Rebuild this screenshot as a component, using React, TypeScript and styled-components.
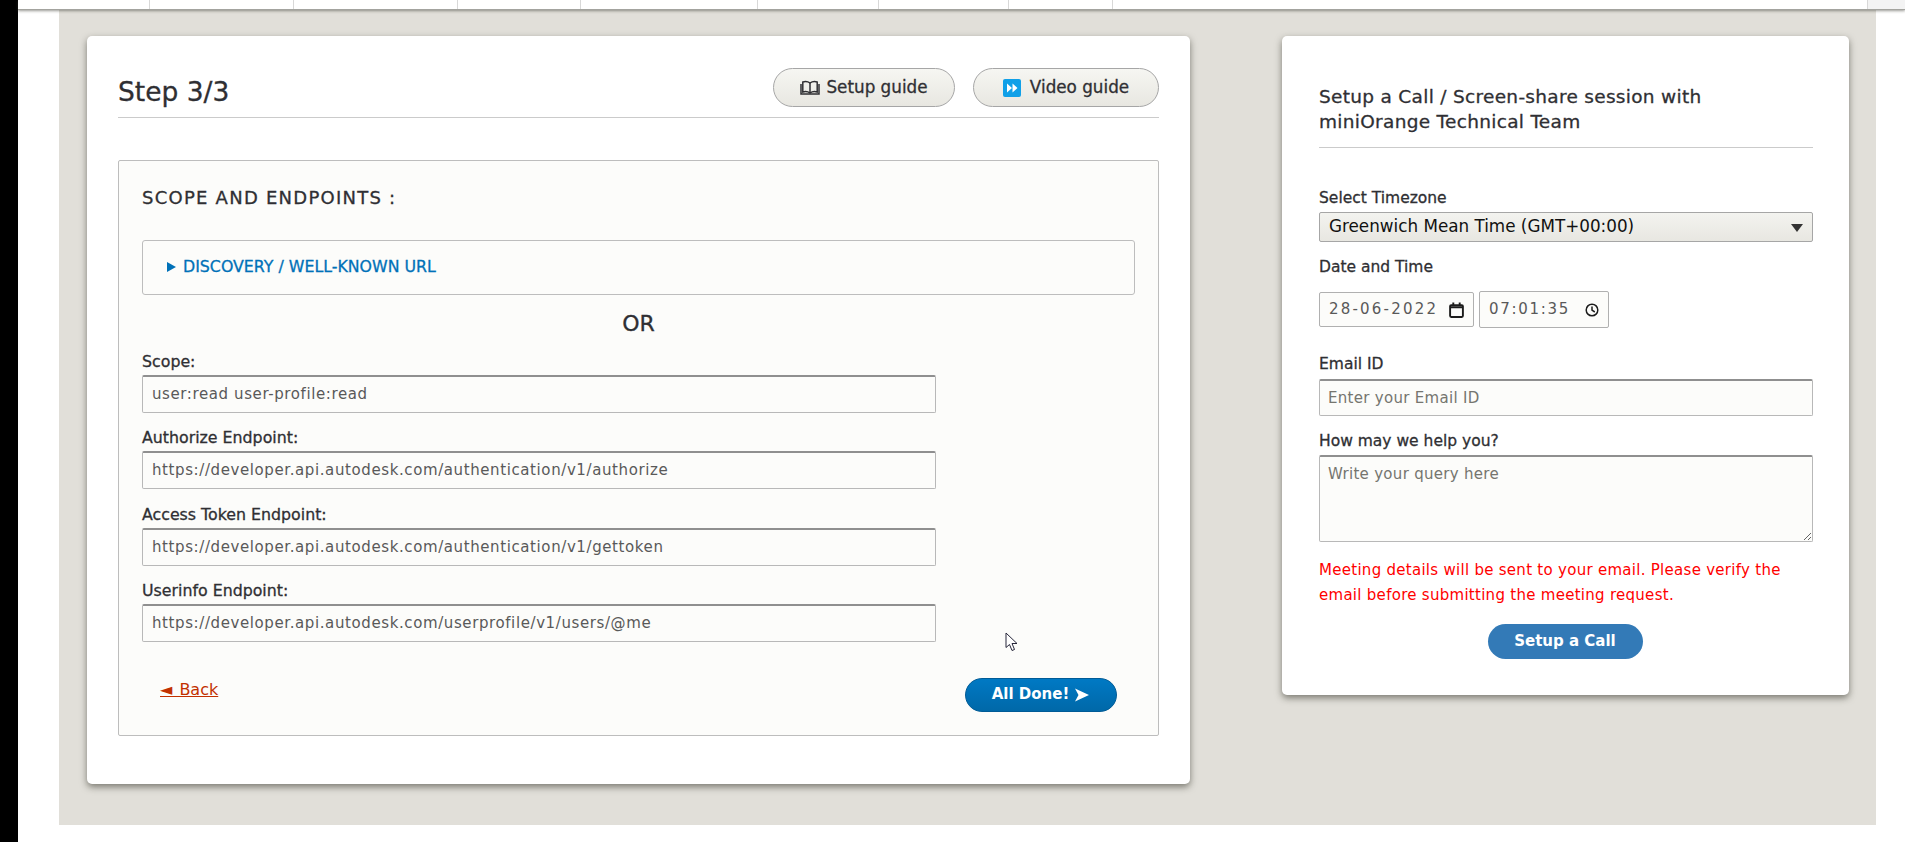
import React from "react";
import styled, { createGlobalStyle, css } from "styled-components";

const heavy = css`
  -webkit-text-stroke: 0.3px currentColor;
`;

const Global = createGlobalStyle`
  html, body { margin: 0; padding: 0; background: #fff; overflow: hidden; }
  * { box-sizing: border-box; }
  body { font-family: "DejaVu Sans", "Open Sans", sans-serif; color: #2f2f33; }
`;

const Page = styled.div`
  display: flex;
  height: 842px;
  background: #fff;
`;
const BlackEdge = styled.div`
  width: 18px;
  background: #000;
  flex: none;
`;
const Column = styled.div`
  flex: 1;
  display: flex;
  flex-direction: column;
  align-items: flex-start;
  min-width: 0;
`;
const TopBar = styled.div`
  width: 100%;
  height: 10px;
  display: flex;
  flex: none;
  position: relative;
  z-index: 2;
  background: #fff;
  border-bottom: 1px solid #a3a39e;
  box-shadow: 0 1px 3px rgba(70, 70, 60, 0.55);
`;
const TopCell = styled.div<{ $w: number }>`
  flex: none;
  width: ${(p) => p.$w}px;
  border-right: 1px solid #d8d8d8;
`;
const TopRest = styled.div`
  flex: 1;
  background: #f3f3f3;
`;
const Main = styled.main`
  margin-left: 41px;
  width: 1817px;
  height: 815px;
  flex: none;
  background: #e1dfd9;
  padding: 26px 27px 0 28px;
  display: flex;
  align-items: flex-start;
  justify-content: space-between;
  position: relative;
`;
const Card = styled.section`
  background: #fff;
  border-radius: 5px;
  box-shadow: 0 3px 7px rgba(40, 40, 30, 0.55);
`;
const WizardCard = styled(Card)`
  width: 1103px;
  height: 748px;
  padding: 32px 31px 0;
`;
const CallCard = styled(Card)`
  width: 567px;
  height: 659px;
  padding: 48px 36px 0 37px;
`;
const Header = styled.header`
  display: flex;
  align-items: flex-start;
  justify-content: space-between;
  height: 50px;
  border-bottom: 1px solid #cbcbcb;
`;
const Heading = styled.h1`
  ${heavy}
  margin: 10px 0 0;
  font-size: 26.5px;
  line-height: 28px;
  font-weight: 400;
  color: #2f2f33;
`;
const GuideGroup = styled.div`
  display: flex;
  gap: 18px;
`;
const GuideButton = styled.button<{ $w: number; $gap: number }>`
  ${heavy}
  width: ${(p) => p.$w}px;
  height: 39px;
  border: 1px solid #a6a6a6;
  border-radius: 20px;
  background: linear-gradient(#f6f6f2, #e8e7e1);
  font: 400 16.8px/1 "DejaVu Sans", sans-serif;
  color: #2f2f33;
  display: flex;
  align-items: center;
  justify-content: center;
  gap: ${(p) => p.$gap}px;
  padding: 0;
`;
const Panel = styled.div`
  margin-top: 42px;
  height: 576px;
  border: 1px solid #bdbdbd;
  border-radius: 2px;
  background: #fcfcfa;
  padding: 27px 23px 0 23px;
`;
const PanelTitle = styled.h2`
  ${heavy}
  margin: 0;
  font-size: 18px;
  line-height: 20px;
  font-weight: 400;
  letter-spacing: 1.25px;
  color: #2f2f33;
`;
const Discovery = styled.details`
  margin-top: 32px;
  height: 55px;
  border: 1px solid #bdbdbd;
  border-radius: 3px;
  padding: 17px 0 0 24px;
`;
const DiscoverySummary = styled.summary`
  ${heavy}
  list-style: none;
  display: flex;
  align-items: center;
  gap: 6px;
  color: #0071b8;
  font-size: 15.8px;
  line-height: 18px;
`;
const Caret = styled.span`
  width: 0;
  height: 0;
  border-left: 9px solid #0071b8;
  border-top: 5px solid transparent;
  border-bottom: 5px solid transparent;
  margin-right: 1px;
`;
const Or = styled.div`
  ${heavy}
  margin-top: 17px;
  text-align: center;
  font-size: 22px;
  line-height: 24px;
  font-weight: 400;
  color: #2f2f33;
`;
const FieldStack = styled.div`
  margin-top: 17px;
  display: flex;
  flex-direction: column;
  gap: 16.33px;
`;
const Field = styled.div`
  display: flex;
  flex-direction: column;
  gap: 4px;
`;
const Label = styled.label`
  ${heavy}
  display: block;
  font-size: 15.8px;
  line-height: 18px;
  color: #2f2f33;
`;
const TextInput = styled.input<{ $h?: number }>`
  display: block;
  width: 100%;
  height: ${(p) => p.$h ?? 38}px;
  border: 1px solid #b8b8b8;
  border-top-color: #8f8f8f;
  border-top-width: 2px;
  border-radius: 2px;
  background: #fcfcfa;
  padding: 0 8px 1px;
  font: 400 15px "DejaVu Sans", sans-serif;
  letter-spacing: 0.3px;
  color: #595959;
  &::placeholder { color: #75756f; opacity: 1; }
`;
const WideInput = styled(TextInput)`
  width: 794px;
  padding-left: 9px;
  letter-spacing: 0.6px;
`;
const Actions = styled.div`
  margin-top: 36px;
  display: flex;
  justify-content: space-between;
  align-items: flex-start;
  padding: 0 18px 0 18px;
`;
const BackLink = styled.a`
  margin-top: 3px;
  color: #c23000;
  font-size: 16px;
  word-spacing: 2px;
  line-height: 18px;
  text-decoration: underline;
`;
const DoneButton = styled.button`
  width: 152px;
  height: 34px;
  border: 1px solid #005b96;
  border-radius: 17px;
  background: linear-gradient(#0079c4, #0068a8);
  color: #fff;
  font: 700 15px/1 "DejaVu Sans", sans-serif;
  padding: 0;
  display: flex;
  align-items: center;
  justify-content: center;
  gap: 5px;
`;
const CallTitle = styled.h2`
  ${heavy}
  margin: 0;
  font-size: 18.5px;
  line-height: 25px;
  letter-spacing: 0.3px;
  font-weight: 400;
  color: #2f2f33;
  padding-bottom: 13px;
  border-bottom: 1px solid #cbcbcb;
`;
const CallForm = styled.form`
  display: flex;
  flex-direction: column;
`;
const CallLabel = styled(Label)<{ $top: number; $bottom: number }>`
  font-size: 15.5px;
  margin-top: ${(p) => p.$top}px;
  margin-bottom: ${(p) => p.$bottom}px;
`;
const SelectWrap = styled.div`
  position: relative;
  height: 30px;
  &::after {
    content: "";
    position: absolute;
    right: 10px;
    top: 12px;
    border-top: 8px solid #333;
    border-left: 6px solid transparent;
    border-right: 6px solid transparent;
    pointer-events: none;
  }
`;
const TimezoneSelect = styled.select`
  appearance: none;
  display: block;
  width: 100%;
  height: 30px;
  border: 1px solid #a6a6a6;
  border-radius: 2px;
  background: linear-gradient(#f3f3ef, #e8e7e1);
  padding: 0 9px 3px;
  font: 400 16.8px "DejaVu Sans", sans-serif;
  color: #111;
`;
const DateRow = styled.div`
  margin-top: 9px;
  display: flex;
  align-items: center;
  gap: 5px;
`;
const DateBox = styled.div<{ $w: number; $h: number }>`
  position: relative;
  width: ${(p) => p.$w}px;
  height: ${(p) => p.$h}px;
`;
const DateInput = styled.input<{ $ls: number }>`
  width: 100%;
  height: 100%;
  border: 1px solid #b0b0b0;
  border-radius: 2px;
  background: #fcfcfa;
  padding: 0 9px 2px;
  font: 400 15px "DejaVu Sans", sans-serif;
  letter-spacing: ${(p) => p.$ls}px;
  color: #595959;
`;
const PickerIcon = styled.svg`
  position: absolute;
  right: 10px;
  top: 50%;
  transform: translateY(-50%);
`;
const Query = styled.textarea`
  display: block;
  width: 100%;
  height: 87px;
  border: 1px solid #b8b8b8;
  border-top: 2px solid #8f8f8f;
  border-radius: 2px;
  background: #fcfcfa;
  padding: 8px 8px;
  font: 400 15px "DejaVu Sans", sans-serif;
  letter-spacing: 0.3px;
  color: #595959;
  &::placeholder { color: #75756f; opacity: 1; }
`;
const Notice = styled.p`
  margin: 16px 0 0;
  color: #f00;
  font-size: 15px;
  letter-spacing: 0.28px;
  line-height: 25px;
`;
const CallButton = styled.button`
  align-self: center;
  margin: 16px 2px 0 0;
  width: 155px;
  height: 35px;
  border: none;
  border-radius: 18px;
  background: #337ab7;
  color: #fff;
  font: 700 15px/1 "DejaVu Sans", sans-serif;
  padding: 0;
`;
const PointerArrow = styled.svg`
  position: absolute;
  left: 946px;
  top: 622px;
  z-index: 3;
`;

const BookIcon = () => (
  <svg width="20" height="16" viewBox="0 0 20 16" fill="none" stroke="#2f2f33" strokeWidth="1.5">
    <path d="M10 3 C8 1.6 5 1.4 2.8 2 V12 C5 11.4 8 11.6 10 13 C12 11.6 15 11.4 17.2 12 V2 C15 1.4 12 1.6 10 3 Z" />
    <path d="M10 3 V13" />
    <path d="M1 4 V14 H19 V4" />
  </svg>
);
const ForwardIcon = () => (
  <svg width="18" height="18" viewBox="0 0 18 18">
    <rect width="18" height="18" rx="2" fill="#10a0e8" />
    <path d="M4 4.5 L9 9 L4 13.5 Z M9.5 4.5 L14.5 9 L9.5 13.5 Z" fill="#fff" />
  </svg>
);
const NextChevron = () => (
  <svg width="16" height="16" viewBox="0 0 16 16">
    <path d="M1 1.5 L15 8 L1 14.5 L4.5 8 Z" fill="#fff" />
  </svg>
);
const CalendarIcon = () => (
  <PickerIcon width="15" height="16" viewBox="0 0 14 15" fill="none" stroke="#1c1c1c" strokeWidth="1.8">
    <rect x="1" y="3" width="12" height="11" rx="1" />
    <path d="M1 5 H13 M4 0.5 V3 M10 0.5 V3" />
  </PickerIcon>
);
const ClockIcon = () => (
  <PickerIcon width="14" height="14" viewBox="0 0 14 14" fill="none" stroke="#1c1c1c" strokeWidth="1.5">
    <circle cx="7" cy="7" r="5.8" />
    <path d="M7 3.5 V7.2 L9.8 9" />
  </PickerIcon>
);

const topCells = [132, 144, 164, 123, 177, 121, 130, 104, 755];
const endpoints = [
  { label: "Scope:", value: "user:read user-profile:read" },
  { label: "Authorize Endpoint:", value: "https://developer.api.autodesk.com/authentication/v1/authorize" },
  { label: "Access Token Endpoint:", value: "https://developer.api.autodesk.com/authentication/v1/gettoken" },
  { label: "Userinfo Endpoint:", value: "https://developer.api.autodesk.com/userprofile/v1/users/@me" },
];

export default function App() {
  return (
    <Page>
      <Global />
      <BlackEdge />
      <Column>
        <TopBar>
          {topCells.map((w, i) => (
            <TopCell key={i} $w={w} />
          ))}
          <TopRest />
        </TopBar>
        <Main>
          <WizardCard>
            <Header>
              <Heading>Step 3/3</Heading>
              <GuideGroup>
                <GuideButton $w={182} $gap={6}>
                  <BookIcon />
                  Setup guide
                </GuideButton>
                <GuideButton $w={186} $gap={9}>
                  <ForwardIcon />
                  Video guide
                </GuideButton>
              </GuideGroup>
            </Header>
            <Panel>
              <PanelTitle>SCOPE AND ENDPOINTS :</PanelTitle>
              <Discovery>
                <DiscoverySummary>
                  <Caret />
                  DISCOVERY / WELL-KNOWN URL
                </DiscoverySummary>
              </Discovery>
              <Or>OR</Or>
              <FieldStack>
                {endpoints.map((e) => (
                  <Field key={e.label}>
                    <Label>{e.label}</Label>
                    <WideInput defaultValue={e.value} />
                  </Field>
                ))}
              </FieldStack>
              <Actions>
                <BackLink href="#">◄ Back</BackLink>
                <DoneButton type="button">
                  All Done!
                  <NextChevron />
                </DoneButton>
              </Actions>
            </Panel>
          </WizardCard>
          <CallCard>
            <CallTitle>
              Setup a Call / Screen-share session with
              <br />
              miniOrange Technical Team
            </CallTitle>
            <CallForm>
              <CallLabel $top={41} $bottom={5}>Select Timezone</CallLabel>
              <SelectWrap>
                <TimezoneSelect defaultValue="gmt">
                  <option value="gmt">Greenwich Mean Time (GMT+00:00)</option>
                </TimezoneSelect>
              </SelectWrap>
              <CallLabel $top={16} $bottom={6}>Date and Time</CallLabel>
              <DateRow>
                <DateBox $w={155} $h={35}>
                  <DateInput $ls={2.2} defaultValue="28-06-2022" />
                  <CalendarIcon />
                </DateBox>
                <DateBox $w={130} $h={37}>
                  <DateInput $ls={1.7} defaultValue="07:01:35" />
                  <ClockIcon />
                </DateBox>
              </DateRow>
              <CallLabel $top={27} $bottom={6}>Email ID</CallLabel>
              <TextInput $h={37} placeholder="Enter your Email ID" />
              <CallLabel $top={16} $bottom={5}>How may we help you?</CallLabel>
              <Query placeholder="Write your query here" />
              <Notice>
                Meeting details will be sent to your email. Please verify the email before submitting the meeting request.
              </Notice>
              <CallButton type="button">Setup a Call</CallButton>
            </CallForm>
          </CallCard>
          <PointerArrow width="14" height="21" viewBox="0 0 14 21">
            <path d="M1 1 V15.5 L4.5 12.5 L7 18.5 L9.5 17.5 L7 11.5 H12 Z" fill="#fff" stroke="#26263a" strokeWidth="1" />
          </PointerArrow>
        </Main>
      </Column>
    </Page>
  );
}
